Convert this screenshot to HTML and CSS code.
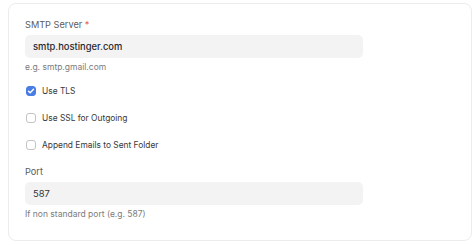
FILE: index.html
```html
<!DOCTYPE html>
<html lang="en">
<head>
    <meta charset="UTF-8">
    <meta name="viewport" content="width=device-width, initial-scale=1.0">
    <title>Email Account</title>
    <link rel="stylesheet" href="styles.css">
</head>
<body>

    <div class="card">
        <div class="field">
            <div class="label">SMTP Server <span class="req">*</span></div>
            <div class="input">smtp.hostinger.com</div>
            <div class="help">e.g. smtp.gmail.com</div>
        </div>

        <div class="check">
            <span class="box checked">
                <svg width="8" height="8" viewBox="0 0 8 8"><path d="M1.5 4.2 L3.2 5.8 L6.5 2.2" fill="none" stroke="#fff" stroke-width="1.4" stroke-linecap="round" stroke-linejoin="round"/></svg>
            </span>
            <span>Use TLS</span>
        </div>
        <div class="check">
            <span class="box"></span>
            <span>Use SSL for Outgoing</span>
        </div>
        <div class="check">
            <span class="box"></span>
            <span>Append Emails to Sent Folder</span>
        </div>

        <div class="field port">
            <div class="label">Port</div>
            <div class="input">587</div>
            <div class="help">If non standard port (e.g. 587)</div>
        </div>
    </div>

</body>
</html>
```

FILE: styles.css
```css
body {
    font-family: Inter, "Noto Sans", sans-serif;
    margin: 3px 2px 0 8px;
    background-color: #fff;
    color: #1f272e;
}
.card {
    border: 1px solid #ececec;
    border-radius: 8px;
    height: 238px;
    box-sizing: border-box;
    padding: 14px 16px 0 16px;
}
.field {
    width: 338px;
}
.label {
    font-size: 9.2px;
    color: #5c5c5c;
    height: 13px;
    line-height: 13px;
    margin-bottom: 4px;
}
.req {
    color: #e24c4c;
}
.input {
    background-color: #f3f3f4;
    border-radius: 5px;
    height: 23px;
    line-height: 23px;
    padding: 0 8px;
    font-size: 9.4px;
    font-weight: 500;
    color: #1f272e;
}
.port .input {
    font-weight: 400;
    color: #333;
}
.help {
    font-size: 8.5px;
    color: #7c7c7c;
    margin-top: 3px;
    line-height: 13px;
}
.check {
    display: flex;
    align-items: center;
    gap: 6px;
    font-size: 8.4px;
    color: #383838;
    height: 14px;
    margin-top: 10px;
    padding-left: 1px;
}
.check + .check {
    margin-top: 13px;
}
.box {
    width: 10px;
    height: 10px;
    box-sizing: border-box;
    border: 1px solid #c4c4c4;
    border-radius: 3px;
    display: flex;
    align-items: center;
    justify-content: center;
}
.box.checked {
    background-color: #4a7de4;
    border-color: #4a7de4;
}
.port {
    margin-top: 13px;
}
```
